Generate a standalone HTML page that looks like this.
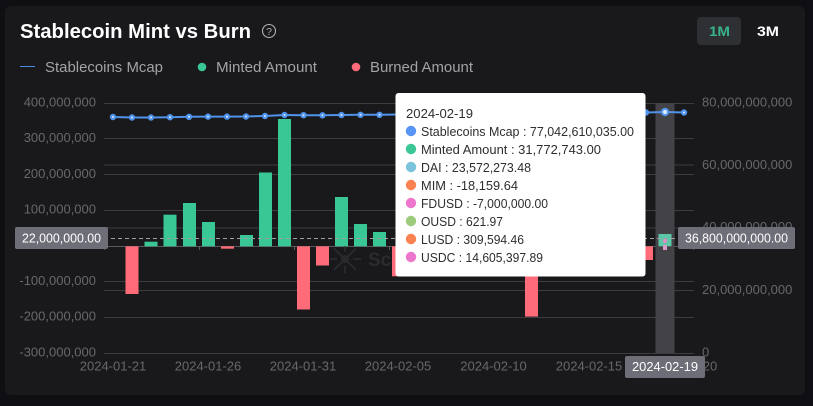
<!DOCTYPE html>
<html><head><meta charset="utf-8"><style>
html,body{margin:0;padding:0;width:813px;height:406px;overflow:hidden;background:#0e0e13}
svg{display:block}
text{font-family:"Liberation Sans",sans-serif}
.y{font-size:13px;fill:#68686c}
.tt{font-size:12.5px;fill:#2e2e30}
</style></head><body>
<svg width="813" height="406" viewBox="0 0 813 406" xmlns="http://www.w3.org/2000/svg">
<rect x="5" y="6" width="800" height="389" rx="6" fill="#19191c"/>
<text x="20" y="38" font-size="20" font-weight="700" fill="#fff" textLength="231" lengthAdjust="spacingAndGlyphs">Stablecoin Mint vs Burn</text>
<circle cx="269" cy="31" r="6.500" fill="none" stroke="#b0b0b4" stroke-width="1.100"/>
<text x="269" y="34.800" font-size="10.500" fill="#b0b0b4" text-anchor="middle">?</text>
<rect x="697" y="17" width="44" height="28" rx="4" fill="#2f3033"/>
<text x="709" y="36" font-size="14" font-weight="700" fill="#38b48d" textLength="21" lengthAdjust="spacingAndGlyphs">1M</text>
<text x="757" y="36" font-size="14" font-weight="700" fill="#fff" textLength="22" lengthAdjust="spacingAndGlyphs">3M</text>
<line x1="20" y1="66.500" x2="35" y2="66.500" stroke="#4a8ae6" stroke-width="1"/>
<text x="45" y="72" font-size="14.500" fill="#a2a2a7" textLength="118" lengthAdjust="spacingAndGlyphs">Stablecoins Mcap</text>
<circle cx="202" cy="67" r="4.300" fill="#38c795"/>
<text x="216" y="72" font-size="14.500" fill="#a2a2a7" textLength="101" lengthAdjust="spacingAndGlyphs">Minted Amount</text>
<circle cx="356" cy="67" r="4.300" fill="#ff6b78"/>
<text x="370" y="72" font-size="14.500" fill="#a2a2a7" textLength="103" lengthAdjust="spacingAndGlyphs">Burned Amount</text>

<g stroke="#3d3d40" stroke-width="1">
<line x1="104" x2="694" y1="103.500" y2="103.500"/><line x1="104" x2="694" y1="138.500" y2="138.500"/>
<line x1="104" x2="694" y1="165" y2="165"/><line x1="104" x2="694" y1="174.500" y2="174.500"/>
<line x1="104" x2="694" y1="210.500" y2="210.500"/><line x1="104" x2="694" y1="228" y2="228"/>
<line x1="104" x2="694" y1="281.500" y2="281.500"/><line x1="104" x2="694" y1="290.500" y2="290.500"/>
<line x1="104" x2="694" y1="317.500" y2="317.500"/><line x1="104" x2="694" y1="353.500" y2="353.500"/>
</g>
<g stroke="#5a5a5f" stroke-width="1">
<line x1="104" x2="694" y1="246.500" y2="246.500"/>
<line x1="104.500" x2="104.500" y1="246" y2="250"/><line x1="199.500" x2="199.500" y1="246" y2="250"/><line x1="294.500" x2="294.500" y1="246" y2="250"/><line x1="389.500" x2="389.500" y1="246" y2="250"/><line x1="693.500" x2="693.500" y1="246" y2="250"/>
</g>

<g fill="#2b2b2f" stroke="#2b2b2f">
<g stroke-width="1.800" fill="none"><path d="M334 248.500L356 270M356 248.500L334 270M330 259H337M353 259H361M345 245V252M345 266V273"/><circle cx="345" cy="259" r="3"/></g>
<text x="368" y="266" font-size="19" font-weight="700" stroke="none">Scatter</text>
</g>

<rect x="655.500" y="103" width="19" height="250" fill="#434347"/>

<g fill="#38c795">
<rect x="144.500" y="241.700" width="13" height="4.600"/>
<rect x="163.500" y="214.700" width="13" height="31.600"/>
<rect x="183" y="203" width="13" height="43.300"/>
<rect x="202" y="222" width="13" height="24.300"/>
<rect x="240" y="235" width="13" height="11.300"/>
<rect x="259" y="172.500" width="13" height="73.800"/>
<rect x="278" y="119" width="13" height="127.300"/>
<rect x="335" y="197" width="13" height="49.300"/>
<rect x="354" y="224" width="13" height="22.300"/>
<rect x="373" y="232" width="13" height="14.300"/>
<rect x="658.500" y="234" width="13" height="12.300" fill="#5cc8a8"/>
</g>
<g fill="#ff6b78">
<rect x="125.500" y="246.300" width="13" height="47.700"/>
<rect x="221" y="246.300" width="13" height="2.400"/>
<rect x="297" y="246.300" width="13" height="63.200"/>
<rect x="316" y="246.300" width="13" height="19.200"/>
<rect x="392" y="246.300" width="13" height="30"/>
<rect x="525" y="246.300" width="13" height="70.300"/>
<rect x="640" y="246.300" width="13" height="13.700"/>
</g>
<circle cx="665" cy="241" r="2" fill="#e58ac8"/>
<rect x="663" y="245" width="4" height="5" fill="#d99ac8"/>

<line x1="104" x2="694" y1="238.500" y2="238.500" stroke="#a0a0a4" stroke-width="1" stroke-dasharray="4 3"/>

<polyline fill="none" stroke="#4f93ea" stroke-width="2" points="113,117 132,117.500 151,117.500 170,117.200 189,116.800 208,116.600 227,116.600 246,116.500 265,116 284.500,115 303.500,115.200 322.500,115.300 341.500,115 360.500,114.800 379.500,114.800 398,114.500 646,112.500 665,112 684,112.500"/>
<g fill="#4f93ea">
<circle cx="113" cy="117" r="3.200"/><circle cx="132" cy="117.500" r="3.200"/><circle cx="151" cy="117.500" r="3.200"/><circle cx="170" cy="117.200" r="3.200"/><circle cx="189" cy="116.800" r="3.200"/><circle cx="208" cy="116.600" r="3.200"/><circle cx="227" cy="116.600" r="3.200"/><circle cx="246" cy="116.500" r="3.200"/><circle cx="265" cy="116" r="3.200"/><circle cx="284.500" cy="115" r="3.200"/><circle cx="303.500" cy="115.200" r="3.200"/><circle cx="322.500" cy="115.300" r="3.200"/><circle cx="341.500" cy="115" r="3.200"/><circle cx="360.500" cy="114.800" r="3.200"/><circle cx="379.500" cy="114.800" r="3.200"/><circle cx="646" cy="112.500" r="3.200"/><circle cx="665" cy="112" r="4.200"/><circle cx="684" cy="112.500" r="3.200"/>
</g>
<g fill="#dbe9fb">
<circle cx="113" cy="117" r="1"/><circle cx="132" cy="117.500" r="1"/><circle cx="151" cy="117.500" r="1"/><circle cx="170" cy="117.200" r="1"/><circle cx="189" cy="116.800" r="1"/><circle cx="208" cy="116.600" r="1"/><circle cx="227" cy="116.600" r="1"/><circle cx="246" cy="116.500" r="1"/><circle cx="265" cy="116" r="1"/><circle cx="284.500" cy="115" r="1"/><circle cx="303.500" cy="115.200" r="1"/><circle cx="322.500" cy="115.300" r="1"/><circle cx="341.500" cy="115" r="1"/><circle cx="360.500" cy="114.800" r="1"/><circle cx="379.500" cy="114.800" r="1"/><circle cx="665" cy="112" r="2.200"/><circle cx="684" cy="112.500" r="1"/>
</g>

<g text-anchor="end">
<text class="y" x="96" y="106.500">400,000,000</text>
<text class="y" x="96" y="142">300,000,000</text>
<text class="y" x="96" y="178">200,000,000</text>
<text class="y" x="96" y="213.500">100,000,000</text>
<text class="y" x="96" y="285">-100,000,000</text>
<text class="y" x="96" y="320.500">-200,000,000</text>
<text class="y" x="96" y="356.500">-300,000,000</text>
</g>
<text class="y" x="702" y="106.500">80,000,000,000</text>
<text class="y" x="702" y="169">60,000,000,000</text>
<text class="y" x="702" y="231">40,000,000,000</text>
<text class="y" x="702" y="294">20,000,000,000</text>
<text class="y" x="702" y="356.500">0</text>
<g text-anchor="middle">
<text class="y" x="113" y="370.500">2024-01-21</text>
<text class="y" x="208" y="370.500">2024-01-26</text>
<text class="y" x="303" y="370.500">2024-01-31</text>
<text class="y" x="398" y="370.500">2024-02-05</text>
<text class="y" x="493.500" y="370.500">2024-02-10</text>
<text class="y" x="589" y="370.500">2024-02-15</text>
<text class="y" x="684" y="370.500">2024-02-20</text>
</g>

<rect x="15" y="227" width="93" height="22" rx="2" fill="#6e6e78"/>
<text x="22" y="242.500" font-size="13" fill="#fff" textLength="79" lengthAdjust="spacingAndGlyphs">22,000,000.00</text>
<rect x="678" y="227" width="117" height="22" rx="2" fill="#6e6e78"/>
<text x="685" y="242.500" font-size="13" fill="#fff" textLength="103" lengthAdjust="spacingAndGlyphs">36,800,000,000.00</text>
<rect x="625" y="356" width="80" height="22" rx="2" fill="#6e6e78"/>
<text x="632" y="371" font-size="13" fill="#fff" textLength="66" lengthAdjust="spacingAndGlyphs">2024-02-19</text>

<rect x="395.500" y="93" width="250" height="183.500" rx="3" fill="#fff"/>
<text class="tt" x="406" y="118" textLength="67" lengthAdjust="spacingAndGlyphs">2024-02-19</text>
<circle cx="411" cy="131" r="5.200" fill="#5694f5"/><text class="tt" x="421" y="136" textLength="213" lengthAdjust="spacingAndGlyphs">Stablecoins Mcap : 77,042,610,035.00</text>
<circle cx="411" cy="149" r="5.200" fill="#3bc795"/><text class="tt" x="421" y="154" textLength="180" lengthAdjust="spacingAndGlyphs">Minted Amount : 31,772,743.00</text>
<circle cx="411" cy="167" r="5.200" fill="#7cc3dc"/><text class="tt" x="421" y="172" textLength="110" lengthAdjust="spacingAndGlyphs">DAI : 23,572,273.48</text>
<circle cx="411" cy="185" r="5.200" fill="#fb8150"/><text class="tt" x="421" y="190" textLength="97" lengthAdjust="spacingAndGlyphs">MIM : -18,159.64</text>
<circle cx="411" cy="203" r="5.200" fill="#ec77cc"/><text class="tt" x="421" y="208" textLength="127" lengthAdjust="spacingAndGlyphs">FDUSD : -7,000,000.00</text>
<circle cx="411" cy="221" r="5.200" fill="#9ccb7c"/><text class="tt" x="421" y="226" textLength="82" lengthAdjust="spacingAndGlyphs">OUSD : 621.97</text>
<circle cx="411" cy="239" r="5.200" fill="#fb8150"/><text class="tt" x="421" y="244" textLength="103" lengthAdjust="spacingAndGlyphs">LUSD : 309,594.46</text>
<circle cx="411" cy="257" r="5.200" fill="#ec77cc"/><text class="tt" x="421" y="262" textLength="122" lengthAdjust="spacingAndGlyphs">USDC : 14,605,397.89</text>
</svg>
</body></html>
